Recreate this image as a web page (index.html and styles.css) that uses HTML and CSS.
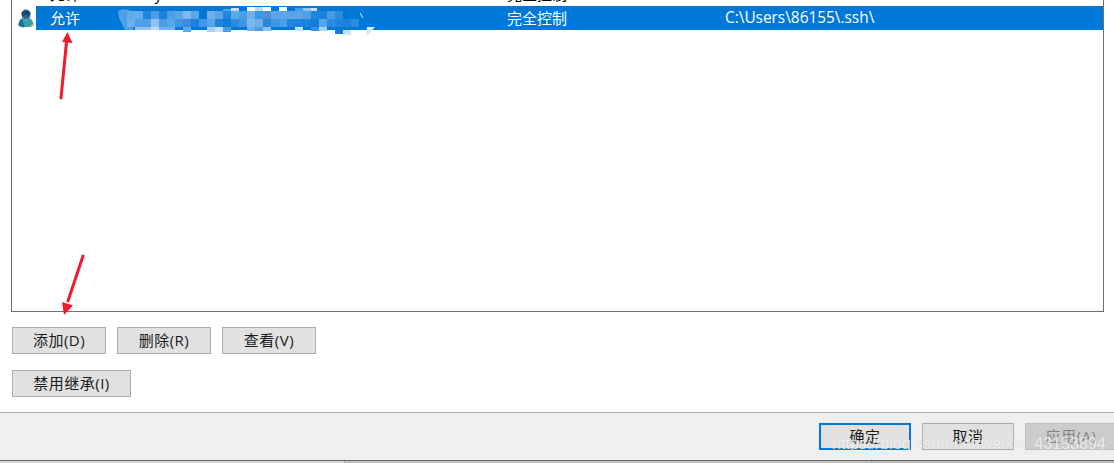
FILE: index.html
```html
<!DOCTYPE html>
<html lang="zh">
<head>
<meta charset="utf-8">
<title>权限</title>
<link rel="stylesheet" href="styles.css">
</head>
<body>
<div class="window">
  <main class="main">
    <div class="list">
      <div class="row">
        <span class="icon-cell"></span>
        <span class="cell type">允许</span>
        <span class="cell name">Everyone</span>
        <span class="cell access">完全控制</span>
        <span class="cell path">C:\Users\86155\.ssh\</span>
      </div>
      <div class="row">
        <span class="icon-cell">
          <svg class="user" width="16" height="19" viewBox="0 0 16 19">
            <path d="M3.500 5C3.500 2 5.500 .5 8 .5s4.500 1.500 4.500 4.500-1.500 5.500-4.500 5.500S3.500 8 3.500 5z" fill="#2a6a90"/>
            <path d="M3.500 4.500C4.500 1 11.500 .5 12.500 4.500L11 7C9 5.500 6 5.500 4.800 7.500z" fill="#1d4a6c"/>
            <path d="M.5 16.500c0-4 1.500-6.500 4.500-7.500L8 11l3-2c3 1 4.500 3.500 4.500 7.500-3 2-12 2-15 0z" fill="#3a9cb0"/>
            <path d="M.5 16.500c0-3 1-5.500 3.500-7l2.500 9C4 18.300 2 17.500.5 16.500z" fill="#1c6f8a"/>
            <rect x="13.500" y="15.500" width="2" height="2" fill="#b7d66a"/>
          </svg>
        </span>
        <span class="cell type">允许</span>
        <span class="cell name"></span>
        <span class="cell access">完全控制</span>
        <span class="cell path">C:\Users\86155\.ssh\</span>
      </div>
    </div>
    <div class="actions">
      <button class="btn">添加(D)</button>
      <button class="btn">删除(R)</button>
      <button class="btn">查看(V)</button>
    </div>
    <div class="actions second">
      <button class="btn wide">禁用继承(I)</button>
    </div>
  </main>
  <footer class="footer">
    <button class="btn small default">确定</button>
    <button class="btn small">取消</button>
    <button class="btn small disabled">应用(A)</button>
  </footer>
  <div class="strip">
    <span class="seg s1"></span><span class="seg s2"></span><span class="seg s3"></span>
  </div>
</div>

<svg class="overlay" width="1114" height="463" viewBox="0 0 1114 463" aria-hidden="true">
  <g class="mosaic">
    <path d="M118 11c6-3 10-2 16 2l-1 17h-8l-6-12z" fill="#4a9fe6"/>
    <rect x="127" y="11" width="8" height="8" fill="#62ace9"/>
    <rect x="135" y="11" width="8" height="8" fill="#62ace9"/>
    <rect x="143" y="11" width="8" height="8" fill="#1f86df"/>
    <rect x="151" y="11" width="8" height="8" fill="#4a9ce5"/>
    <rect x="159" y="11" width="8" height="8" fill="#1a82dc"/>
    <rect x="167" y="11" width="8" height="8" fill="#4a9fe6"/>
    <rect x="175" y="11" width="8" height="8" fill="#5aa5e8"/>
    <rect x="183" y="11" width="8" height="8" fill="#7fb8ec"/>
    <rect x="191" y="11" width="8" height="8" fill="#5aa5e8"/>
    <rect x="207" y="11" width="8" height="8" fill="#70b0ea"/>
    <rect x="215" y="11" width="8" height="8" fill="#5aa5e8"/>
    <rect x="223" y="11" width="8" height="8" fill="#1f86df"/>
    <rect x="231" y="11" width="8" height="8" fill="#5ea9e8"/>
    <rect x="239" y="11" width="8" height="8" fill="#4a9ce5"/>
    <rect x="247" y="11" width="8" height="8" fill="#6fb0ea"/>
    <rect x="255" y="11" width="8" height="8" fill="#3b98e5"/>
    <rect x="263" y="11" width="8" height="8" fill="#4d8fdc"/>
    <rect x="271" y="11" width="8" height="8" fill="#5aa5e8"/>
    <rect x="279" y="11" width="8" height="8" fill="#5aa5e8"/>
    <rect x="287" y="11" width="8" height="8" fill="#5aa5e8"/>
    <rect x="295" y="11" width="8" height="8" fill="#5aa5e8"/>
    <rect x="303" y="11" width="8" height="8" fill="#4f9fe6"/>
    <rect x="311" y="11" width="8" height="8" fill="#1f86df"/>
    <rect x="319" y="11" width="8" height="8" fill="#1a82dc"/>
    <rect x="327" y="11" width="8" height="8" fill="#4a9ce5"/>
    <rect x="335" y="11" width="8" height="8" fill="#2a8ce0"/>

    <rect x="127" y="19" width="8" height="8" fill="#6fb0ea"/>
    <rect x="135" y="19" width="8" height="8" fill="#4da0e6"/>
    <rect x="143" y="19" width="8" height="8" fill="#4da0e6"/>
    <rect x="151" y="19" width="8" height="8" fill="#92c3ef"/>
    <rect x="159" y="19" width="8" height="8" fill="#4a9ce5"/>
    <rect x="167" y="19" width="8" height="8" fill="#5aa5e8"/>
    <rect x="175" y="19" width="8" height="8" fill="#3b98e5"/>
    <rect x="183" y="19" width="8" height="8" fill="#3f8ad8"/>
    <rect x="191" y="19" width="8" height="8" fill="#1a82dc"/>
    <rect x="199" y="19" width="8" height="8" fill="#3b98e5"/>
    <rect x="207" y="19" width="8" height="8" fill="#5aa5e8"/>
    <rect x="215" y="19" width="8" height="8" fill="#1f86df"/>
    <rect x="223" y="19" width="8" height="8" fill="#0f7edb"/>
    <rect x="231" y="19" width="8" height="8" fill="#2a8ce0"/>
    <rect x="239" y="19" width="8" height="8" fill="#3b98e5"/>
    <rect x="247" y="19" width="8" height="8" fill="#7cb8ec"/>
    <rect x="255" y="19" width="8" height="8" fill="#6fb0ea"/>
    <rect x="263" y="19" width="8" height="8" fill="#2a84da"/>
    <rect x="271" y="19" width="8" height="8" fill="#3b98e5"/>
    <rect x="279" y="19" width="8" height="8" fill="#4a9ce5"/>
    <rect x="287" y="19" width="8" height="8" fill="#1f86df"/>
    <rect x="295" y="19" width="8" height="8" fill="#1f86df"/>
    <rect x="303" y="19" width="8" height="8" fill="#1a82dc"/>
    <rect x="311" y="19" width="8" height="8" fill="#0f7edb"/>
    <rect x="319" y="19" width="8" height="8" fill="#5aa5e8"/>
    <rect x="327" y="19" width="8" height="8" fill="#2a8ce0"/>
    <rect x="335" y="19" width="8" height="8" fill="#1f86df"/>
    <rect x="343" y="19" width="8" height="8" fill="#1a82dc"/>
    <rect x="351" y="19" width="8" height="8" fill="#2a8ce0"/>

    <rect x="135" y="27" width="16" height="3" fill="#8ec2ef"/>
    <rect x="151" y="27" width="8" height="3" fill="#b9d9f5"/>
    <rect x="159" y="27" width="16" height="3" fill="#6fb0ea"/>
    <rect x="183" y="27" width="8" height="5" fill="#5ea9e8"/>
    <rect x="207" y="27" width="8" height="5" fill="#a8d0f2"/>
    <rect x="215" y="27" width="8" height="5" fill="#c8e1f7"/>
    <rect x="223" y="27" width="8" height="5" fill="#4a9ce5"/>
    <rect x="247" y="27" width="8" height="4" fill="#6fb0ea"/>
    <rect x="255" y="27" width="8" height="4" fill="#4a9ce5"/>
    <rect x="263" y="27" width="8" height="4" fill="#8ec2ef"/>
    <rect x="295" y="27" width="8" height="4" fill="#c8e1f7"/>
    <rect x="311" y="27" width="8" height="4" fill="#3b90de"/>
    <rect x="319" y="27" width="8" height="4" fill="#a8d0f2"/>
    <rect x="335" y="30" width="8" height="4" fill="#0f7edb"/>
    <rect x="343" y="30" width="8" height="5" fill="#c8e1f7"/>
    <path d="M367 27h8l-7 8h-2z" fill="#d5e8f8"/>

    <rect x="247" y="7" width="8" height="4" fill="#ffffff"/>
    <rect x="255" y="7" width="8" height="4" fill="#bcdcf6"/>
    <rect x="263" y="7" width="8" height="4" fill="#ffffff"/>
    <rect x="279" y="7" width="8" height="4" fill="#ffffff"/>
    <rect x="295" y="8" width="8" height="3" fill="#4a9ce5"/>
    <rect x="303" y="8" width="8" height="3" fill="#8ec2ef"/>
    <rect x="311" y="8" width="6" height="3" fill="#c8e1f7"/>
    <rect x="223" y="9" width="8" height="2" fill="#5aa5e8"/>
    <rect x="231" y="8" width="8" height="3" fill="#c8e1f7"/>
    <path class="mark" d="M360 13l3 5"/>
  </g>
  <g class="arrow">
    <path d="M61 98L66.500 42"/>
    <path class="head" d="M67.500 32L72.500 43L62 42z"/>
    <path d="M83 256L68 301"/>
    <path class="head" d="M64 315L62 302L73 305.500z"/>
  </g>
</svg>
<div class="watermark">https://blog.csdn.net/weixin_43153894</div>
</body>
</html>
```
FILE: styles.css
```css
* {
  box-sizing: border-box;
}

html,
body {
  margin: 0;
  width: 1114px;
  height: 463px;
  overflow: hidden;
  background: #fff;
}

body {
  position: relative;
  font-family: "Open Sans", "Noto Sans CJK SC", sans-serif;
  font-size: 15px;
  color: #1a1a1a;
}

.window {
  display: flex;
  flex-direction: column;
  height: 463px;
}

.main {
  height: 412px;
  padding: 0 10px 0 11px;
}

.list {
  height: 312px;
  border: 1px solid #6e6e6e;
  border-top: 0;
  overflow: hidden;
  background: #fff;
}

.row {
  display: flex;
  height: 24px;
  line-height: 24px;
}

.row:first-child {
  margin-top: -18px;
  line-height: 25px;
  color: #000;
}

.row + .row {
  color: #fff;
}

.icon-cell {
  display: flex;
  align-items: center;
  justify-content: center;
  flex: none;
  width: 24px;
  padding-left: 3px;
  background: #fff;
}

.user {
  display: block;
  margin-top: 1px;
}

.cell {
  flex: none;
  white-space: nowrap;
}

.row + .row .cell {
  background: #0078d7;
}

.type {
  width: 68px;
  padding-left: 14px;
}

.name {
  width: 403px;
  padding-left: 20px;
}

.access {
  width: 218px;
}

.path {
  flex: 1 1 auto;
  font-size: 15.400px;
}

.actions {
  display: flex;
  gap: 11px;
  margin-top: 15px;
  padding-left: 1px;
}

.second {
  margin-top: 16px;
}

.btn {
  width: 94px;
  height: 27px;
  padding: 0;
  border: 1px solid #adadad;
  background: #e1e1e1;
  color: #1a1a1a;
  font: inherit;
  line-height: 25px;
  letter-spacing: 0.5px;
}

.wide {
  width: 119px;
}

.footer {
  display: flex;
  justify-content: flex-end;
  gap: 11px;
  height: 48px;
  padding-top: 10px;
  border-top: 1px solid #b0b0b0;
  background: #efefef;
}

.small {
  flex: none;
  width: 92px;
}

.default {
  border: 2px solid #0078d7;
  line-height: 23px;
}

.disabled {
  margin-right: -3px;
  border-color: #bfbfbf;
  background: #cccccc;
  color: #838383;
}

.strip {
  display: flex;
  flex: 1;
  border-top: 1px solid #666;
  background: #d8d8d8;
}

.seg {
  height: 100%;
  border-right: 1px solid #a8a8a8;
}

.s1 {
  width: 345px;
}

.s2 {
  width: 527px;
  background: #c4c4c4;
}

.s3 {
  flex: 1;
  background: #bdbdbd;
}

.overlay {
  position: absolute;
  left: 0;
  top: 0;
  pointer-events: none;
}

.mark {
  fill: none;
  stroke: #dcecfa;
  stroke-width: 1;
}

.arrow path {
  fill: none;
  stroke: #f01c2c;
  stroke-width: 3;
  stroke-linecap: round;
}

.arrow .head {
  fill: #f01c2c;
  stroke: none;
}

.watermark {
  position: absolute;
  left: 832px;
  top: 431px;
  font-family: "Liberation Sans", Arial, sans-serif;
  font-size: 16.100px;
  line-height: 24px;
  white-space: nowrap;
  color: rgba(255, 255, 255, 0.72);
  text-shadow: 0 0 1px rgba(170, 170, 170, 0.55);
  pointer-events: none;
}
```
